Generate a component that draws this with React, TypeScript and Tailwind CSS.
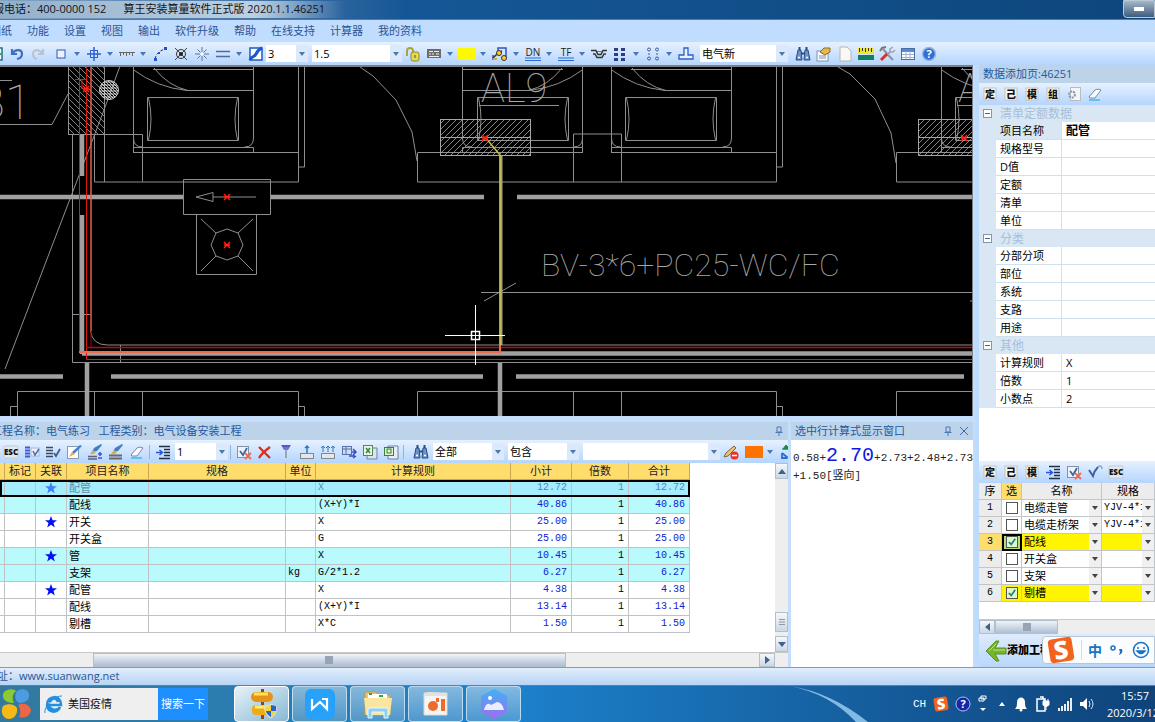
import { useState } from "react";
import type { ReactNode } from "react";

const icons: Record<string, ReactNode> = {
  exit: (
    <>
      <rect x="3" y="2" width="11" height="12" fill="#fff" stroke="#1f6f8f" strokeWidth="1.5" />
      <path d="M6 8h6M9 5l3 3-3 3" stroke="#1d9a3c" strokeWidth="2" fill="none" />
    </>
  ),
  undo: <path d="M3 3v5h5M3.500 7.500C6 3 13 3 13 8c0 3-2 4.500-5 5" fill="none" stroke="#3f6fc4" strokeWidth="2.200" />,
  redo: <path d="M13 3v5H8M12.500 7.500C10 3 3 3 3 8c0 3 2 4.500 4 5" fill="none" stroke="#b9c3d0" strokeWidth="2" />,
  square: <rect x="4" y="4" width="8" height="8" fill="#eaf3ff" stroke="#3158b8" />,
  cross: (
    <>
      <path d="M8 1v14M1 8h14" stroke="#2f5fd0" strokeWidth="1.500" />
      <rect x="4.500" y="4.500" width="7" height="7" fill="none" stroke="#2f5fd0" />
    </>
  ),
  ruler: <path d="M0 6.500h16M1.500 6v4M4.500 6v3M7.500 6v4M10.500 6v3M13.500 6v4" stroke="#666" fill="none" />,
  curve: (
    <>
      <path d="M3 13C4 8 7 5 13 3" stroke="#333" strokeDasharray="3 2" fill="none" />
      <path d="M2 12h3v3H2zM12 1h3v3h-3zM6 6h2v2H6z" fill="#2450d0" />
    </>
  ),
  node: (
    <>
      <path d="M2 2l12 12M14 2L2 14" stroke="#444" />
      <circle cx="8" cy="8" r="4.500" fill="none" stroke="#333" />
      <circle cx="8" cy="8" r="2" fill="#222" />
    </>
  ),
  spark: (
    <>
      <path d="M8 1v5M8 10v5M1 8h5M10 8h5M3.500 3.500l3 3M12.500 3.500l-3 3M3.500 12.500l3-3M12.500 12.500l-3-3" stroke="#5d7397" />
      <circle cx="8" cy="8" r="1.500" fill="#fff" />
    </>
  ),
  lines: <path d="M1 5.500h14M1 10.500h14" stroke="#4d6d9f" strokeWidth="1.500" />,
  zigzag: (
    <>
      <rect x="2" y="2" width="12" height="12" fill="#fff" stroke="#1c58c7" strokeWidth="1.500" />
      <path d="M2 14c2-5 4-2 6-6s3-5 6-6" fill="none" stroke="#1c58c7" strokeWidth="3" />
    </>
  ),
  lock: (
    <>
      <path d="M2 10V5c0-4 6-4 6 0v2" fill="none" stroke="#a8a43c" strokeWidth="2" />
      <rect x="6" y="6" width="8" height="9" rx="2" fill="#e2da52" stroke="#8f8b25" />
      <path d="M10 9v3" stroke="#777" strokeWidth="1.500" />
    </>
  ),
  keyboard: (
    <>
      <rect x="1" y="3" width="14" height="9" fill="#6c6c6c" />
      <path d="M3 5.500h4M8 5.500h5M3 8h2M6 8h2M10 8h3M3 10.500h10" stroke="#eee" />
    </>
  ),
  yellow: <rect x="-1" y="2" width="18" height="12" fill="#fdf900" />,
  orange: <rect x="-1" y="2" width="18" height="12" fill="#ff7200" />,
  link: (
    <>
      <path d="M1 9v5M6 9V2h8v9" fill="none" stroke="#2d54c4" strokeWidth="1.500" />
      <path d="M1 12l5-5 4-2" fill="none" stroke="#333" strokeWidth="1.500" />
      <circle cx="7" cy="7" r="2.500" fill="#ffc928" stroke="#333" />
      <circle cx="12" cy="12" r="2.500" fill="#ffc928" stroke="#333" />
      <path d="M1 13h4" stroke="#e9a71f" strokeWidth="2" />
    </>
  ),
  dn: (
    <>
      <text x="8" y="10" textAnchor="middle" fontSize="10" fill="#222">DN</text>
      <path d="M0 12h16M0 14.500h16" stroke="#2c68dd" />
    </>
  ),
  tf: (
    <>
      <text x="8" y="10" textAnchor="middle" fontSize="10" fill="#222">TF</text>
      <path d="M0 12h16M0 14.500h16" stroke="#2c68dd" />
    </>
  ),
  pipe: (
    <>
      <path d="M0 4.500h5l2 4h3l2-4h4M2 8h2l2 3.500h5L13 8h2" fill="none" stroke="#333" strokeWidth="1.500" />
      <path d="M6 5.500h5" stroke="#777" />
    </>
  ),
  dots: <path d="M2 2h4v3H2zM9 2h4v3H9zM2 7h4v3H2zM9 7h4v3H9zM2 12h4v3H2zM9 12h4v3H9z" fill="#2c3f82" />,
  rings: (
    <g fill="none" stroke="#3d5c9c">
      <circle cx="4" cy="3.500" r="1.500" />
      <circle cx="12" cy="3.500" r="1.500" />
      <circle cx="4" cy="12.500" r="1.500" />
      <circle cx="12" cy="12.500" r="1.500" />
      <path d="M3 8h2M11 8h2" />
    </g>
  ),
  tee: <path d="M6 2h4v7h5v4H1V9h5z" fill="#e8f1ff" stroke="#2f5fc4" strokeWidth="1.300" />,
  find: (
    <>
      <path d="M1 14l2-10h3l1 10zM9 14l1-10h3l2 10z" fill="#6f92c5" stroke="#284d86" />
      <path d="M4.500 1v3M11.500 1v3M6 7.500h4" stroke="#284d86" strokeWidth="2" />
      <path d="M3 11.500h2M11 11.500h2" stroke="#fff" strokeWidth="1.500" />
    </>
  ),
  prop: (
    <>
      <rect x="1" y="5" width="11" height="10" fill="#f7f9fc" stroke="#8095b5" />
      <path d="M3 10h7M3 12h7" stroke="#8095b5" />
      <path d="M4 6l4-4h6v4l-5 3z" fill="#e5b84b" stroke="#8d6a20" />
    </>
  ),
  page: <path d="M3 1h7l4 4v10H3z" fill="#f8f9f5" stroke="#b3b8b4" />,
  scale: (
    <>
      <rect x="0" y="2" width="16" height="6" fill="#f1e72a" />
      <path d="M1.500 2v4M4.500 2v3M7.500 2v4M10.500 2v3M13.500 2v4" stroke="#333" />
      <rect x="0" y="9" width="16" height="5" fill="#0e7f63" />
    </>
  ),
  tools: (
    <>
      <path d="M4 3l7 8 3 3" stroke="#8c96a3" strokeWidth="2.200" />
      <path d="M1 5l2-3 4-1" fill="none" stroke="#777" strokeWidth="2" />
      <path d="M14 1l-3 2v3h3l2-2" fill="none" stroke="#9aa5b3" strokeWidth="1.500" />
      <path d="M11 6L8 9" stroke="#9aa5b3" strokeWidth="2" />
      <path d="M8 8l-6 6" stroke="#d63228" strokeWidth="3" />
    </>
  ),
  grid: (
    <>
      <rect x="1.500" y="2.500" width="13" height="11" fill="#fff" stroke="#496fa9" />
      <path d="M2 4.500h12" stroke="#5b88cc" strokeWidth="3" />
      <path d="M2 8.500h12M2 11.500h12M6 5v8M10 5v8" stroke="#9bb3d3" />
    </>
  ),
  help: (
    <>
      <circle cx="8" cy="8" r="6.500" fill="#2f6fd6" stroke="#9fb7dd" strokeWidth="1.500" />
      <text x="8" y="12" textAnchor="middle" fontSize="11" fontWeight="700" fill="#fff">?</text>
    </>
  ),
  esc: (
    <>
      <rect x="1" y="2" width="14" height="12" rx="1" fill="#e4e9ee" stroke="#c4cbd4" />
      <text x="8" y="11" textAnchor="middle" fontSize="8" fontWeight="800" fill="#111">ESC</text>
    </>
  ),
  listCheck: (
    <>
      <path d="M1 3.500h5M1 6.500h5M1 9.500h5M1 12.500h5" stroke="#4357d8" strokeWidth="2" />
      <rect x="7" y="4" width="8" height="8" fill="#eef" stroke="#aab5c8" />
      <path d="M9 7l2 4 4-6" fill="none" stroke="#3f6fa8" strokeWidth="1.500" />
    </>
  ),
  listTick: (
    <>
      <path d="M1 3.500h7M1 6.500h7M1 9.500h7M1 12.500h7" stroke="#3f4a5f" strokeWidth="1.500" />
      <path d="M9 9l2 3 4-7" fill="none" stroke="#3b5f9a" strokeWidth="1.800" />
    </>
  ),
  edit: (
    <>
      <rect x="1.500" y="2.500" width="11" height="12" fill="#fff" stroke="#8899b0" />
      <path d="M5 11l2-4 7-6 2 1-7 7z" fill="#3f83d2" />
      <path d="M3 13l3-5 3 2z" fill="#e6a94b" />
    </>
  ),
  brush: (
    <>
      <path d="M5 8l2-4 7-4 1 1-5 6z" fill="#3b7fc4" />
      <path d="M3 10l3-4 3 2-2 2z" fill="#d9a860" />
      <path d="M1 12.500h9M1 15h9" stroke="#5a6474" strokeWidth="1.500" />
      <path d="M11 10h4M13 8v4M11 14h4" stroke="#4450d8" strokeWidth="1.500" />
    </>
  ),
  paint: (
    <>
      <path d="M5 8l2-4 7-4 1 1-5 6z" fill="#3b7fc4" />
      <path d="M3 10l3-4 3 2-2 2z" fill="#d9a860" />
      <path d="M1 11.500h13M1 14.500h13" stroke="#6a6a68" strokeWidth="1.800" />
    </>
  ),
  eraser: (
    <>
      <path d="M2 11l6-7c1-1 5-1 6 0l-6 8H3z" fill="#fafcff" stroke="#7389a8" />
      <path d="M2 14h11" stroke="#43b8e8" strokeWidth="1.500" />
    </>
  ),
  indent: (
    <>
      <path d="M4 2.500h11M9 5.500h6M9 8.500h6M9 11.500h6M4 14.500h11" stroke="#222f45" strokeWidth="1.500" />
      <path d="M1 8.500h6M4.500 6l3 2.500-3 2.500" fill="none" stroke="#2455e4" strokeWidth="1.500" />
    </>
  ),
  uncheck: (
    <>
      <rect x="1.500" y="2.500" width="11" height="11" fill="#eef3f8" stroke="#8392a6" />
      <path d="M4 7l3 4 4-7" fill="none" stroke="#43669c" strokeWidth="1.800" />
      <path d="M9 9l6 6M15 9l-6 6" stroke="#ee6a50" strokeWidth="1.800" />
    </>
  ),
  del: <path d="M2 3l11 11M13 3C9 6 5 9 2 14" fill="none" stroke="#e02d18" strokeWidth="2.300" />,
  filter: (
    <>
      <path d="M3 1h10l-3 5H6z" fill="#6b71d8" />
      <path d="M8 5v9" stroke="#8a90a0" strokeWidth="1.500" />
      <path d="M4 2h8" stroke="#4044b8" />
    </>
  ),
  up1: (
    <>
      <path d="M8 9V2M6 4l2-2 2 2" fill="none" stroke="#2e78c8" strokeWidth="1.500" />
      <rect x="1.500" y="9.500" width="13" height="5" fill="#e4e7e9" stroke="#808890" />
    </>
  ),
  up3: (
    <>
      <path d="M3 8V2M8 8V2M13 8V2M1 4l2-2 2 2M6 4l2-2 2 2M11 4l2-2 2 2" fill="none" stroke="#2e78c8" />
      <rect x="1.500" y="9.500" width="13" height="5" fill="#e4e7e9" stroke="#808890" />
    </>
  ),
  move: (
    <>
      <rect x="1.500" y="2.500" width="9" height="8" fill="#cfdcf3" stroke="#5573a8" />
      <path d="M2 5h8M5 3v7" stroke="#5573a8" />
      <path d="M8 12h6M11 8h4M12 5l3 3-3 3M12 14l3-2" fill="none" stroke="#3c49c8" strokeWidth="1.500" />
    </>
  ),
  excel: (
    <>
      <path d="M5 4h10v11H5z" fill="#d9e4ef" stroke="#6983a5" />
      <rect x="1.500" y="1.500" width="9" height="10" fill="#eaf7e6" stroke="#4f8c4c" />
      <path d="M4 4l4 5M8 4L4 9" stroke="#2d8a32" strokeWidth="1.500" />
    </>
  ),
  excel2: (
    <>
      <path d="M5 2h10v13H5z" fill="#e8eef4" stroke="#6983a5" />
      <rect x="1.500" y="3.500" width="9" height="8" fill="#e4f2d9" stroke="#3f7d3c" />
      <rect x="4" y="5" width="4" height="4" fill="none" stroke="#2d8a32" />
    </>
  ),
  pencilStop: (
    <>
      <path d="M1 13l2-4 8-7 2 2-8 8z" fill="#eec36f" stroke="#81603c" />
      <circle cx="11.500" cy="11.500" r="4" fill="#e3342a" />
      <path d="M9 11.500h5" stroke="#fff" strokeWidth="1.500" />
    </>
  ),
  refresh: (
    <>
      <path d="M3 5h7M7 1l4 4H4z" fill="#1d8a3c" stroke="#1d8a3c" />
      <path d="M3 9v5h5M3 9l6 5" fill="none" stroke="#2d6fd0" strokeWidth="1.800" />
    </>
  ),
  gear: (
    <>
      <rect x="4.500" y="1.500" width="10" height="13" fill="#f3f5f6" stroke="#b5bdc5" />
      <circle cx="6" cy="8.500" r="3" fill="none" stroke="#8a98a6" strokeWidth="2" strokeDasharray="2 1" />
    </>
  ),
  tickGo: (
    <>
      <path d="M2 6l4 6c1-4 3-7 5-9" fill="none" stroke="#3f63a0" strokeWidth="2" />
      <path d="M11 3c2-2 4-1 4 2" fill="none" stroke="#8ba3c6" strokeWidth="1.500" />
    </>
  ),
};

const charIcon = (c: string) => (
  <>
    <rect x="2" y="2" width="12" height="12" fill="#f7f5ee" stroke="#c3c3bb" />
    <text x="8" y="12" textAnchor="middle" fontSize="10" fontWeight="900" fill="#111">{c}</text>
  </>
);

function Arrow() {
  return (
    <svg viewBox="0 0 6 4" className="h-1 w-1.5 shrink-0" aria-hidden="true">
      <path d="M0 0h6L3 4z" fill="#4a78b5" />
    </svg>
  );
}

function Tool({ name, drop }: { name: string; drop?: boolean }) {
  return (
    <button type="button" aria-label={name} className="flex h-5 shrink-0 items-center">
      <span className="flex w-[21px] justify-center">
        <svg viewBox="0 0 16 16" className="h-4 w-4 overflow-visible">
          {icons[name] ?? charIcon(name)}
        </svg>
      </span>
      {drop && (
        <span className="flex w-3 justify-center">
          <Arrow />
        </span>
      )}
    </button>
  );
}

function Combo({ label, value, className }: { label: string; value: string; className: string }) {
  return (
    <div className={`relative h-[17px] shrink-0 bg-white ${className}`}>
      <select aria-label={label} className="h-full w-full appearance-none px-0.5 text-[11px] leading-4 text-black outline-none">
        <option>{value}</option>
      </select>
      <span className="pointer-events-none absolute inset-y-0 right-0 flex w-3 items-center justify-center bg-[#dbe9fb]">
        <Arrow />
      </span>
    </div>
  );
}

function Sep() {
  return <span className="mx-0.5 h-3.5 w-px shrink-0 bg-[#94b4dc]" />;
}

const bar = "flex shrink-0 items-center overflow-hidden bg-linear-to-b from-[#e6f1ff] to-[#b5d5fd]";

function Star({ x, y }: { x: number; y: number }) {
  return (
    <g stroke="#ff2010" strokeWidth="1.500">
      <path d={`M${x - 3} ${y - 3}l6 6m0-6l-6 6m0-3h6`} />
    </g>
  );
}

function Seat({ x, flip }: { x: number; flip?: boolean }) {
  return (
    <g transform={flip ? `translate(${x + 120} 0) scale(-1 1)` : `translate(${x} 0)`}>
      <path d="M.5 66v87M120.500 66v72q0 9-9 9M.5 138q0 9 9 9M0 147.500h120.500v5M20 69.500h100M54 90.500h66" />
      <path d="M0 69.500q24 18 54 21M21 68q14 18 34 22.500" />
      <path d="M14.500 97.500h91v43h-91zM15.500 98q5 21 0 42M104.500 98q-5 21 0 42" />
    </g>
  );
}

function Drawing() {
  return (
    <svg viewBox="0 67 972 349" preserveAspectRatio="xMinYMin slice" className="h-full w-full bg-black" role="img" aria-label="CAD">
      <defs>
        <pattern id="fwd" width="6" height="6" patternUnits="userSpaceOnUse">
          <path d="M-1 7L7-1M-1 1l2-2M5 7l2-2" stroke="#a5a5a5" strokeWidth=".8" />
        </pattern>
        <pattern id="back" width="6" height="6" patternUnits="userSpaceOnUse">
          <path d="M-1-1l8 8M5-1l2 2M-1 5l2 2" stroke="#a5a5a5" strokeWidth=".8" />
        </pattern>
        <pattern id="dense" width="3" height="3" patternUnits="userSpaceOnUse">
          <path d="M0 0l3 3M0 1h3" stroke="#ddd" strokeWidth=".9" />
        </pattern>
      </defs>

      <g fill="none" stroke="#8e8e8e">
        <Seat x={133} />
        <Seat x={463} flip />
        <Seat x={611} />
        <Seat x={941} />
        {/* walls and cabinets */}
        <path d="M133 152.500h165M298.500 66v116h-204v-48M304.500 66v101h-6M68 134.500h74.500v47M104.500 66v116M68.500 66v68" />
        <path d="M417.500 152.500h165M417.500 153v29h359V66M782.500 66v101h-6M573.500 182v-48h48v48M611 152.500h165" />
        <path d="M896.500 182v-29.500H972M896.500 182H972" />
        <path d="M360 67l13 9 23 24 16 32 5 29M838 67l12 7 25 25 16 34 5 30" />
        <path d="M120 66L104 110 5 369M0 124.500h52L68 94M0 80.500h12" />
        {/* corridor */}
        <path d="M72.500 134v228.500H972M90.500 331q2 14 17 14H972M72 314.500h18M120.500 345v17" />
        <path d="M10.500 416v-9.500h7M17.500 416v-24.500h281V416M304.500 416v-9.500h-6M94.500 392v24M142.500 392v24" />
        <path d="M417.500 416v-24.500h359V416M782.500 416v-9.500h-6M573.500 392v24M621.500 392v24M896.500 416v-24.500H972" />
        <path d="M481 292.500h491M484 301l32-18M479 105.500h80M957 105.500h15M970 301h2" />
        {/* outlet symbols */}
        <path d="M183.500 179.500h87v35h-87zM196.500 214.500h60v60h-60zM196 197l17-4.500v9zM213 197h43" />
        <path d="M227 229l11 4 5 12-5 11-11 4-11-4-5-11 5-12zM201 219l15 14M253 219l-15 14M201 271l15-15M253 271l-15-15" />
      </g>

      <g fill="none" stroke="#a0a0a0" strokeWidth="4.500">
        <path d="M0 197h183M271 197h213M517 197h455M0 376.500h63M111 376.500h372M516 376.500h448" />
        <path d="M82 134v42M82 215v139M87 363v53M500 363v53M82 353.500h890" />
        <path d="M501 155v190" strokeWidth="3" />
      </g>

      <rect x="68" y="66" width="36" height="68" fill="url(#back)" />
      <circle cx="109" cy="90" r="9.500" fill="url(#dense)" stroke="#ccc" />
      <g stroke="#a5a5a5">
        <rect x="440.500" y="119.500" width="90" height="36" fill="url(#fwd)" />
        <rect x="918.500" y="119.500" width="60" height="36" fill="url(#fwd)" />
        <path d="M440 137.500h90M918 137.500h54" />
      </g>

      <g fill="none">
        <path d="M79.500 66v287M86.500 66v293.500H972" stroke="#d81c10" />
        <path d="M91 66v265" stroke="#f05a48" strokeWidth="1.500" />
        <path d="M91 331v17" stroke="#a00" />
        <path d="M86 347.500h886" stroke="#b80c0c" strokeWidth="1.500" />
        <path d="M79 352h421v-7" stroke="#ee6a54" strokeWidth="2" />
        <path d="M75 79.500h11M82 80v9" stroke="#e02010" />
        <path d="M485 137l15 18v190" stroke="#c9c430" strokeWidth="1.500" />
      </g>
      <Star x={86} y={89} />
      <Star x={227} y={197} />
      <Star x={227} y={245} />
      <Star x={485} y={138} />
      <Star x={964} y={138} />

      <g fill="#a8a8a8" className="font-['Roboto',sans-serif]" fontWeight="100">
        <text x="541" y="276" fontSize="32">BV-3*6+PC25-WC/FC</text>
        <text x="481" y="102" fontSize="40">AL9</text>
        <text x="958" y="102" fontSize="40">A</text>
        <text x="-24" y="119" fontSize="48">B1</text>
      </g>

      <path d="M445 335.500h60M475.500 305v60" stroke="#fff" />
      <rect x="471.500" y="331.500" width="8" height="8" fill="none" stroke="#fff" strokeWidth="1.500" />
    </svg>
  );
}

const menus = ["图纸", "功能", "设置", "视图", "输出", "软件升级", "帮助", "在线支持", "计算器", "我的资料"];

const rows = [
  { star: true, name: "配管", unit: "", rule: "X", sub: "12.72", total: "12.72", hl: true },
  { star: false, name: "配线", unit: "", rule: "(X+Y)*I", sub: "40.86", total: "40.86", hl: true },
  { star: true, name: "开关", unit: "", rule: "X", sub: "25.00", total: "25.00", hl: false },
  { star: false, name: "开关盒", unit: "", rule: "G", sub: "25.00", total: "25.00", hl: false },
  { star: true, name: "管", unit: "", rule: "X", sub: "10.45", total: "10.45", hl: true },
  { star: false, name: "支架", unit: "kg", rule: "G/2*1.2", sub: "6.27", total: "6.27", hl: true },
  { star: true, name: "配管", unit: "", rule: "X", sub: "4.38", total: "4.38", hl: false },
  { star: false, name: "配线", unit: "", rule: "(X+Y)*I", sub: "13.14", total: "13.14", hl: false },
  { star: false, name: "剔槽", unit: "", rule: "X*C", sub: "1.50", total: "1.50", hl: false },
];

const groups = [
  { title: "清单定额数据", items: [["项目名称", "配管"], ["规格型号", ""], ["D值", ""], ["定额", ""], ["清单", ""], ["单位", ""]] },
  { title: "分类", items: [["分部分项", ""], ["部位", ""], ["系统", ""], ["支路", ""], ["用途", ""]] },
  { title: "其他", items: [["计算规则", "X"], ["倍数", "1"], ["小数点", "2"]] },
];

const parts = [
  { name: "电缆走管", spec: "YJV-4*1" },
  { name: "电缆走桥架", spec: "YJV-4*1" },
  { name: "配线", spec: "" },
  { name: "开关盒", spec: "" },
  { name: "支架", spec: "" },
  { name: "剔槽", spec: "" },
];

function Pin() {
  return (
    <svg viewBox="0 0 10 10" className="h-2.5 w-2.5">
      <path d="M3 1h4v5H3zM1.500 6.500h7M5 7v3" fill="none" stroke="#4c79b5" />
    </svg>
  );
}

function ItemTable() {
  const td = "border-r border-b border-[#bfc3c6] p-0 overflow-hidden whitespace-nowrap";
  return (
    <table className="w-[690px] table-fixed border-separate border-spacing-0 text-[11px] leading-4">
      <colgroup>
        <col className="w-[5px]" />
        <col className="w-[31px]" />
        <col className="w-[31px]" />
        <col className="w-[82px]" />
        <col className="w-[137px]" />
        <col className="w-[30px]" />
        <col className="w-[195px]" />
        <col className="w-[61px]" />
        <col className="w-[57px]" />
        <col className="w-[61px]" />
      </colgroup>
      <thead>
        <tr className="h-[17px] bg-[#ffdd6d]">
          {["", "标记", "关联", "项目名称", "规格", "单位", "计算规则", "小计", "倍数", "合计"].map((h) => (
            <th key={h} className="overflow-hidden border-r border-b border-[#c9a850] p-0 font-normal whitespace-nowrap text-[#222]">{h}</th>
          ))}
        </tr>
      </thead>
      <tbody>
        {rows.map((r, i) => (
          <tr
            key={i}
            className={`h-[17px] ${i === 0 ? "bg-[#a5edfe] text-[#5f8f9e] outline-2 -outline-offset-2 outline-black" : r.hl ? "bg-[#b9fafd]" : "bg-white"}`}
          >
            <td className={td}></td>
            <td className={td}></td>
            <td className={td}>
              {r.star && (
                <svg viewBox="0 0 12 12" className="mx-auto h-3 w-3">
                  <path d="M6 0l1.600 4.200H12L8.500 7 9.800 11.500 6 8.800 2.200 11.500 3.500 7 0 4.200h4.400z" fill={i === 0 ? "#3f7fff" : "#0010f5"} />
                </svg>
              )}
            </td>
            <td className={`${td} pl-0.5`}>{r.name}</td>
            <td className={td}></td>
            <td className={`${td} pl-0.5 font-['Liberation_Mono',monospace] text-[10px]`}>{r.unit}</td>
            <td className={`${td} pl-0.5 font-['Liberation_Mono',monospace] text-[10px]`}>{r.rule}</td>
            <td className={`${td} pr-1 text-right font-['Liberation_Mono',monospace] text-[10px] ${i === 0 ? "text-[#4d86cf]" : "text-[#1020d0]"}`}>{r.sub}</td>
            <td className={`${td} pr-1 text-right font-['Liberation_Mono',monospace] text-[10px]`}>1</td>
            <td className={`${td} pr-1 text-right font-['Liberation_Mono',monospace] text-[10px] ${i === 0 ? "text-[#4d86cf]" : "text-[#1020d0]"}`}>{r.total}</td>
          </tr>
        ))}
      </tbody>
    </table>
  );
}

function PartsTable() {
  const [checked, setChecked] = useState([false, false, true, false, false, true]);
  const toggle = (i: number) => setChecked(checked.map((c, j) => (j === i ? !c : c)));
  const td = "border-r border-b border-[#c3c6c9] p-0 overflow-hidden whitespace-nowrap";

  return (
    <table className="w-full table-fixed border-separate border-spacing-0 text-[11px] leading-4">
      <colgroup>
        <col className="w-[23px]" />
        <col className="w-[20px]" />
        <col className="w-[80px]" />
        <col />
      </colgroup>
      <thead>
        <tr className="h-[17px] bg-[#ececec]">
          <th className={`${td} font-normal`}>序</th>
          <th className={`${td} bg-[#ffdd6d] font-normal`}>选</th>
          <th className={`${td} font-normal`}>名称</th>
          <th className={`${td} font-normal`}>规格</th>
        </tr>
      </thead>
      <tbody>
        {parts.map((p, i) => (
          <tr key={p.name} className={`h-[17px] ${checked[i] ? "bg-[#fff500]" : "bg-white"}`}>
            <td className={`${td} text-center font-['Liberation_Mono',monospace] text-[10px] ${i === 2 ? "bg-[#ffdd6d]" : "bg-[#ececec]"}`}>{i + 1}</td>
            <td className={`${td} ${i === 2 ? "bg-[#b5dc85] outline-2 -outline-offset-2 outline-black" : ""}`}>
              <label className="mx-auto grid h-4 w-4 place-items-center">
                <input
                  type="checkbox"
                  aria-label={p.name}
                  checked={checked[i]}
                  onChange={() => toggle(i)}
                  className="col-start-1 row-start-1 h-3 w-3 appearance-none border border-[#555] bg-white checked:bg-[#e2f5c8]"
                />
                {checked[i] && (
                  <svg viewBox="0 0 10 10" className="pointer-events-none col-start-1 row-start-1 h-2 w-2">
                    <path d="M1 5l3 3 5-7" fill="none" stroke="#117f87" strokeWidth="2" />
                  </svg>
                )}
              </label>
            </td>
            {[p.name, p.spec].map((t, j) => (
              <td key={j} className={td}>
                <div className="flex h-4 items-center">
                  <span className={j ? "flex-1 overflow-hidden pl-0.5 font-['Liberation_Mono',monospace] text-[10px]" : "flex-1 overflow-hidden pl-0.5"}>{t}</span>
                  <span className="flex h-4 w-3 items-center justify-center bg-[#f0f0f0]">
                    <svg viewBox="0 0 6 4" className="h-1 w-1.5">
                      <path d="M0 0h6L3 4z" fill="#444" />
                    </svg>
                  </span>
                </div>
              </td>
            ))}
          </tr>
        ))}
      </tbody>
    </table>
  );
}

function SogouMark({ className }: { className: string }) {
  return (
    <svg viewBox="0 0 28 28" className={className} aria-label="Sogou">
      <g transform="rotate(-9 14 14)">
        <rect x="2" y="2" width="24" height="24" rx="4" fill="#f4631e" />
        <text x="14" y="23" textAnchor="middle" fontSize="25" fontWeight="800" fill="#fff">S</text>
      </g>
    </svg>
  );
}

const scrollBtn = "flex shrink-0 items-center justify-center border border-[#b4bfcc] bg-linear-to-b from-[#f5f8fb] to-[#ccd7e4] text-[#40618c]";
const caption = "flex h-[18px] shrink-0 items-center overflow-hidden bg-[#bdd3ea] text-[11px] whitespace-nowrap text-[#2359a0]";
const taskBtn = "flex h-full w-[55px] items-center justify-center rounded-sm border border-[#d3e9f6]/80 bg-linear-to-b from-white/45 to-white/20";

function Taskbar() {
  return (
    <footer className="relative flex h-9 shrink-0 items-center overflow-hidden bg-linear-to-r from-[#33799c] via-[#1c80ca] via-45% to-[#0f437a] text-white">
      <svg viewBox="0 0 80 36" className="absolute left-[790px] h-9 w-20" aria-hidden="true">
        <path d="M0 0q40 6 78 36H66Q40 8 0 0z" fill="#9cd2f6" opacity=".8" />
      </svg>
      <button type="button" aria-label="开始" className="flex w-10 shrink-0 justify-start">
        <svg viewBox="0 0 32 32" className="h-8 w-8">
          <path d="M14 15C4 15 1 9 4 4c4-4 10-3 12-1-4 3-4 7-2 12z" fill="#8fc931" />
          <path d="M17 3c6-4 13-1 12 5 0 5-5 7-10 7-4-2-5-8-2-12z" fill="#4c9be3" />
          <path d="M3 18c5-3 12-2 14 2 1 6-3 11-8 11-6 0-9-7-6-13z" fill="#f6b916" />
          <path d="M18 17c6-3 12 0 13 5-1 6-6 9-12 7 2-4 2-7-1-12z" fill="#ee6648" />
        </svg>
      </button>
      <form className="flex h-8 w-[168px] shrink-0 items-stretch" onSubmit={(e) => e.preventDefault()}>
        <label className="flex min-w-0 flex-1 items-center gap-1 bg-[#efefef] pl-1">
          <svg viewBox="0 0 20 20" className="h-5 w-5 shrink-0">
            <path d="M16 13c-2 4-10 4-11-2h12c0-11-14-10-14 0 0 8 11 9 13 2M6 8c1-5 7-4 8 0" fill="none" stroke="#238fe0" strokeWidth="2.500" />
            <path d="M1 19C-1 13 12 1 18 2" fill="none" stroke="#238fe0" />
          </svg>
          <input aria-label="搜索" defaultValue="美国疫情" className="w-full min-w-0 text-[11px] text-[#111] outline-none" />
        </label>
        <button type="submit" className="w-[50px] shrink-0 bg-[#1e8fff] text-[11px]">搜索一下</button>
      </form>
      <div className="ml-[26px] flex h-full shrink-0 gap-[3px]">
        <button type="button" aria-label="算王" className="flex h-full w-[55px] items-center justify-center rounded-sm border border-white bg-linear-to-br from-[#e7f2f6] to-[#87b9d6]">
          <svg viewBox="0 0 32 32" className="h-8 w-8">
            <path d="M15 1h3v30h-3z" fill="#8c4a0d" />
            <rect x="5" y="4" width="22" height="10" rx="5" fill="#e69316" />
            <path d="M8 6h14" stroke="#ffe15a" strokeWidth="3" />
            <rect x="6" y="17" width="20" height="10" rx="4" fill="#edab17" />
            <path d="M9 19h13" stroke="#fff06b" strokeWidth="3" />
            <path d="M19 18q5 0 6-2 2 2 5 2c1 7-2 10-5 12-4-2-7-6-6-12z" fill="#f7d33b" stroke="#dbe6f0" />
            <path d="M25 17v6h5v-5zM25 23v6c-3-2-5-4-5-6z" fill="#2563c4" />
          </svg>
        </button>
        <button type="button" aria-label="WPS" className={taskBtn}>
          <svg viewBox="0 0 32 32" className="h-8 w-8">
            <rect x="1" y="1" width="30" height="30" rx="6" fill="#28a1fb" />
            <path d="M8 11v10l8-7 7 7V11h-5" fill="none" stroke="#fff" strokeWidth="2.200" />
          </svg>
        </button>
        <button type="button" aria-label="文件夹" className={taskBtn}>
          <svg viewBox="0 0 32 32" className="h-8 w-8">
            <path d="M3 4h11l2 3h12v20H3z" fill="#e7c46d" stroke="#c59b42" />
            <path d="M6 6h19v4H6z" fill="#fff" />
            <path d="M7 6h3M17 8h4" stroke="#2aa845" strokeWidth="2" />
            <path d="M2 10h28l-2 17H4z" fill="#fae5a0" />
            <path d="M6 30v-8q0-2 2-2h16q2 0 2 2v8h-4v-6H10v6z" fill="#8dd1f0" stroke="#e5f6ff" />
          </svg>
        </button>
        <button type="button" aria-label="录屏" className={taskBtn}>
          <svg viewBox="0 0 32 32" className="h-8 w-8">
            <path d="M4 5h23v22H4z" fill="#f6f5f3" stroke="#d8d8d8" />
            <path d="M4 5l5-1 18 1v3H4z" fill="#e4e2df" />
            <circle cx="13" cy="18" r="5" fill="#ec6c2c" />
            <path d="M21 11h4v12h-4z" fill="#ec6c2c" />
            <path d="M16 10h3v4h-3z" fill="#ec6c2c" />
          </svg>
        </button>
        <button type="button" aria-label="看图" className={taskBtn}>
          <svg viewBox="0 0 32 32" className="h-8 w-8">
            <defs>
              <linearGradient id="hex" x1="0" y1="0" x2="0" y2="1">
                <stop offset="0" stopColor="#3fb2f6" />
                <stop offset="1" stopColor="#a06cf0" />
              </linearGradient>
            </defs>
            <path d="M16 1l13 7v16l-13 7-13-7V8z" fill="url(#hex)" />
            <path d="M6 22c1-5 4-8 7-5l6-3c4 0 6 4 7 8z" fill="#e9edff" />
            <circle cx="12" cy="10" r="2" fill="#fff" />
          </svg>
        </button>
      </div>
      <div className="ml-auto flex shrink-0 items-center">
        <span className="w-5 font-['Liberation_Mono',monospace] text-[11px]">CH</span>
        <SogouMark className="h-4 w-4" />
        <svg viewBox="0 0 16 16" className="ml-1.5 h-4 w-4">
          <circle cx="8" cy="8" r="7" fill="#1726a8" stroke="#b6bfe9" />
          <text x="8" y="12" textAnchor="middle" fontSize="11" fontWeight="700" fill="#fff">?</text>
        </svg>
        <svg viewBox="0 0 16 20" className="ml-1 h-5 w-4">
          <path d="M6 2h5v3H6zM4 4h5v3H4z" fill="none" stroke="#fff" />
          <path d="M5 14h6l-3 3z" fill="#fff" />
        </svg>
        <svg viewBox="0 0 10 6" className="mx-1.5 h-1.5 w-2.5">
          <path d="M2 5h6L5 1z" fill="#fff" />
        </svg>
        <div className="flex items-center gap-1.5">
          <svg viewBox="0 0 16 16" className="h-4 w-4">
            <path d="M2 13c2-2 2-4 2-7 0-6 8-6 8 0 0 3 0 5 2 7z" fill="#fff" />
            <circle cx="8" cy="14" r="1.500" fill="#fff" />
          </svg>
          <svg viewBox="0 0 16 16" className="h-4 w-4">
            <path d="M2 3h8v12H2zM5 1h3v2" fill="none" stroke="#fff" strokeWidth="1.500" />
            <path d="M8 5h6v4q-3 3-6 0zM9 3v2M13 3v2M11 10v4" stroke="#fff" fill="#fff" />
          </svg>
          <svg viewBox="0 0 16 16" className="h-4 w-4">
            <path d="M1 12h2v3H1zM4 10h2v5H4zM7 8h2v7H7zM10 5h2v10h-2zM13 2h2v13h-2z" fill="#e6edf4" />
          </svg>
          <svg viewBox="0 0 16 16" className="h-4 w-4">
            <path d="M1 6h3l4-4v12l-4-4H1z" fill="#fff" />
            <path d="M10 5q2 3 0 6M12 3q4 5 0 10" fill="none" stroke="#dbe7f2" />
          </svg>
        </div>
        <div className="ml-3 w-[48px] overflow-hidden text-[11px] leading-[17px] whitespace-nowrap">
          <div className="pl-3.5">15:57</div>
          <div>2020/3/12</div>
        </div>
      </div>
    </footer>
  );
}

export default function App() {
  return (
    <div className="flex h-screen flex-col overflow-hidden bg-[#c4ddfb] font-['Open_Sans','Noto_Sans_CJK_SC',sans-serif] text-[11px] text-black">
      <header className="flex h-5 shrink-0 items-center overflow-hidden border-b border-[#547ca3] bg-linear-to-r from-[#83a4c4] via-[#155796] via-35% to-[#0e467c]">
        <h1 className="-ml-[18px] shrink-0 bg-linear-to-r from-[#8fadc9] via-[#bdd0e1] via-75% to-transparent pr-5 text-[11px] whitespace-pre text-[#10151c]">
          客服电话：400-0000 152{"      "}算王安装算量软件正式版 2020.1.1.46251
        </h1>
        <button type="button" aria-label="最小化" className="ml-auto flex h-[18px] w-8 shrink-0 items-center justify-center self-start rounded-bl border border-[#b8c9da] bg-linear-to-b from-[#a7b7c6] to-[#3d5e7d]">
          <span className="h-1 w-2.5 bg-white" />
        </button>
      </header>
      <nav className="flex h-[22px] shrink-0 items-center gap-[15px] bg-[#c0dcff] text-[#2b5592]">
        {menus.map((m) => (
          <button key={m} type="button" className="shrink-0 first:-ml-2.5">{m}</button>
        ))}
      </nav>
      <div className={`${bar} h-[23px]`}>
        <div className="-ml-[15px] flex items-center">
          <Tool name="exit" />
          <Tool name="undo" />
          <Tool name="redo" />
        </div>
        <div className="ml-0.5 flex items-center">
          <Tool name="square" drop />
          <Tool name="cross" drop />
          <Tool name="ruler" drop />
          <Tool name="curve" />
          <Tool name="node" />
          <Tool name="spark" />
          <Tool name="lines" drop />
          <Tool name="zigzag" />
        </div>
        <Combo label="线宽" value="3" className="w-[42px]" />
        <Combo label="比例" value="1.5" className="ml-1 w-[90px]" />
        <Tool name="lock" />
        <Tool name="keyboard" drop />
        <Tool name="yellow" drop />
        <Tool name="link" drop />
        <Tool name="dn" drop />
        <Tool name="tf" drop />
        <Tool name="pipe" />
        <Tool name="dots" drop />
        <Tool name="rings" drop />
        <Tool name="tee" />
        <Combo label="专业" value="电气新" className="mr-1 ml-1 w-[88px]" />
        <Tool name="find" />
        <Tool name="prop" />
        <Tool name="page" />
        <Tool name="scale" />
        <Tool name="tools" />
        <Tool name="grid" />
        <Tool name="help" />
      </div>

      <main className="flex min-h-0 flex-1">
        <div className="flex min-w-0 flex-1 flex-col">
          <div className="mr-0.5 min-h-0 flex-1 border-t-2 border-r border-[#7c8086]">
            <Drawing />
          </div>

          <div className="flex h-[251px] shrink-0 gap-[3px] pt-1.5">
            <section className="flex min-w-0 flex-1 flex-col">
              <div className={caption}>
                <h2 className="-ml-[9px] whitespace-pre">工程名称：电气练习{"   "}工程类别：电气设备安装工程</h2>
                <button type="button" aria-label="固定" className="mr-1 ml-auto">
                  <Pin />
                </button>
              </div>
              <div className={`${bar} h-[23px]`}>
                <Tool name="esc" />
                <Tool name="listCheck" />
                <Tool name="listTick" />
                <Tool name="edit" />
                <Tool name="brush" />
                <Tool name="paint" />
                <Tool name="eraser" />
                <Sep />
                <Tool name="indent" />
                <Combo label="层级" value="1" className="ml-0.5 w-[53px]" />
                <span className="w-1" />
                <Sep />
                <Tool name="uncheck" />
                <Tool name="del" />
                <Tool name="filter" />
                <Tool name="up1" />
                <Tool name="up3" />
                <Tool name="move" />
                <Tool name="excel" />
                <Tool name="excel2" />
                <Sep />
                <span className="w-1 shrink-0" />
                <Tool name="find" />
                <div className="ml-0.5 flex gap-1">
                  <Combo label="范围" value="全部" className="w-[71px]" />
                  <Combo label="条件" value="包含" className="w-[71px]" />
                  <Combo label="关键字" value="" className="w-[137px]" />
                </div>
                <Tool name="pencilStop" />
                <span className="w-0.5 shrink-0" />
                <Tool name="orange" drop />
                <Tool name="refresh" />
              </div>
              <div className="flex min-h-0 flex-1">
                <div className="min-w-0 flex-1 overflow-hidden bg-white">
                  <ItemTable />
                </div>
                <div className="flex w-[13px] shrink-0 flex-col bg-[#eeeeee]">
                  <button type="button" aria-label="上" className={`${scrollBtn} h-4`}>
                    <svg viewBox="0 0 8 5" className="h-[5px] w-2"><path d="M0 5h8L4 0z" fill="currentColor" /></svg>
                  </button>
                  <div className={`${scrollBtn} mt-auto h-5`}>
                    <svg viewBox="0 0 6 6" className="h-1.5 w-1.5"><path d="M0 .5h6M0 3h6M0 5.500h6" stroke="#8a97a6" /></svg>
                  </div>
                  <button type="button" aria-label="下" className={`${scrollBtn} mt-1 h-4`}>
                    <svg viewBox="0 0 8 5" className="h-[5px] w-2"><path d="M0 0h8L4 5z" fill="currentColor" /></svg>
                  </button>
                </div>
              </div>
              <div className="flex h-[15px] shrink-0 border-t border-[#c9c9c9] bg-[#eeeeee] pr-[13px]">
                <div className="ml-[12%] flex w-[61%] items-center justify-center border border-[#b4bfcc] bg-linear-to-b from-[#eff4f8] to-[#aebfd3]">
                  <span className="h-2 w-2 bg-[#96a4b5]" />
                </div>
                <button type="button" aria-label="右" className={`${scrollBtn} ml-auto w-4`}>
                  <svg viewBox="0 0 5 8" className="h-2 w-[5px]"><path d="M0 0v8l5-4z" fill="currentColor" /></svg>
                </button>
              </div>
            </section>

            <section className="mr-0.5 flex w-[182px] shrink-0 flex-col">
              <div className={`${caption} px-1`}>
                <h2>选中行计算式显示窗口</h2>
                <span className="ml-auto flex gap-1.5">
                  <button type="button" aria-label="固定"><Pin /></button>
                  <button type="button" aria-label="关闭">
                    <svg viewBox="0 0 10 10" className="h-2.5 w-2.5"><path d="M1 1l8 8M9 1L1 9" stroke="#3c6cac" /></svg>
                  </button>
                </span>
              </div>
              <div className="flex-1 overflow-hidden bg-white pt-1 pl-0.5 font-['Liberation_Mono','Noto_Sans_CJK_SC',monospace] text-[11px] text-[#222]">
                <p className="h-6 leading-6 whitespace-nowrap">
                  0.58+<b className="font-['Liberation_Mono',monospace] text-[20px] font-normal text-[#1018e0]">2.70</b>+2.73+2.48+2.73
                </p>
                <p className="leading-4">+1.50[竖向]</p>
              </div>
            </section>
          </div>
        </div>

        <aside className="flex w-[180px] shrink-0 flex-col border-l-4 border-[#bcdbff] bg-white">
          <div className={`${caption} px-1`}>
            <h2>数据添加页:46251</h2>
          </div>
          <div className={`${bar} h-[22px]`}>
            {["定", "己", "模", "组", "gear", "eraser"].map((n) => <Tool key={n} name={n} />)}
          </div>
          <div className="shrink-0 bg-[#d9e7f4]">
            {groups.map((g) => (
              <section key={g.title}>
                <h3 className="flex h-[17px] items-center gap-2 pl-1 text-[12px] leading-4 text-[#a3c0da]">
                  <svg viewBox="0 0 9 9" className="h-[9px] w-[9px]">
                    <rect x=".5" y=".5" width="8" height="8" fill="#fff" stroke="#8598ab" />
                    <path d="M2 4.500h5" stroke="#53687d" />
                  </svg>
                  {g.title}
                </h3>
                {g.items.map(([k, v]) => (
                  <label key={k} className={`ml-[17px] flex h-[18px] border-b border-[#cfe1ef] ${k === "项目名称" ? "" : "bg-white"}`}>
                    <span className="w-[66px] shrink-0 border-r border-[#cfe1ef] pl-1 leading-[17px]">{k}</span>
                    <input
                      defaultValue={v}
                      className={`w-full min-w-0 bg-white px-1 leading-[17px] outline-none ${k === "项目名称" ? "text-[12px] font-bold" : ""}`}
                    />
                  </label>
                ))}
              </section>
            ))}
          </div>
          <div className="flex-1" />
          <div className={`${bar} h-[22px]`}>
            {["定", "己", "模", "indent", "uncheck", "tickGo", "esc"].map((n) => <Tool key={n} name={n} />)}
          </div>
          <PartsTable />
          <div className="mt-[17px] flex h-[15px] shrink-0 border-t border-[#c9c9c9] bg-[#eeeeee]">
            <button type="button" aria-label="左" className={`${scrollBtn} w-4`}>
              <svg viewBox="0 0 5 8" className="h-2 w-[5px]"><path d="M5 0v8L0 4z" fill="currentColor" /></svg>
            </button>
            <div className="flex w-[63px] items-center justify-center border border-[#b4bfcc] bg-linear-to-b from-[#eff4f8] to-[#aebfd3]">
              <span className="h-2 w-2 bg-[#96a4b5]" />
            </div>
          </div>
          <div className="relative flex h-[33px] shrink-0 items-center bg-linear-to-b from-[#deebfc] to-[#b9d7fb] pl-1.5">
            <button type="button" className="flex items-center text-[11px] font-black whitespace-nowrap">
              <svg viewBox="0 0 22 22" className="h-[22px] w-[22px]">
                <path d="M1 11L11 1h3l-4 7h11v6H10l4 7h-3z" fill="#74b52c" stroke="#57901f" />
                <path d="M4 11l7-7M8 10h12" stroke="#bde384" fill="none" />
              </svg>
              添加工程
            </button>
            <div className="absolute top-0.5 right-0 flex h-7 w-[113px] items-center rounded-l border border-[#b7c6d6] bg-[#fbfcfe] pl-1">
              <SogouMark className="h-7 w-7 shrink-0" />
              <span className="mx-1.5 h-5 w-px shrink-0 bg-[#f0d7c4]" />
              <span className="text-[14px] font-bold text-[#1673c8]">中</span>
              <svg viewBox="0 0 14 14" className="mx-2 h-3.5 w-3.5 shrink-0">
                <circle cx="3" cy="5" r="2" fill="none" stroke="#1673c8" strokeWidth="1.500" />
                <path d="M9 6h3c1 3 0 5-3 6l1-3z" fill="#1673c8" />
              </svg>
              <svg viewBox="0 0 18 18" className="h-[18px] w-[18px] shrink-0">
                <circle cx="9" cy="9" r="7.500" fill="none" stroke="#1673c8" strokeWidth="1.500" />
                <path d="M6 6v2M12 6v2M5 10q4 5 8 0z" fill="#1673c8" stroke="#1673c8" strokeWidth="1.500" />
              </svg>
            </div>
          </div>
        </aside>
      </main>

      <div className="flex h-[19px] shrink-0 items-center overflow-hidden border-t border-b border-t-[#7d9cbf] border-b-[#5f7f9f] bg-linear-to-b from-[#e1eefd] to-[#b8d4f4] text-[#2b5592]">
        <p className="-ml-[14px] whitespace-nowrap">
          网址：<a href="#home">www.suanwang.net</a>
        </p>
      </div>
      <Taskbar />
    </div>
  );
}
